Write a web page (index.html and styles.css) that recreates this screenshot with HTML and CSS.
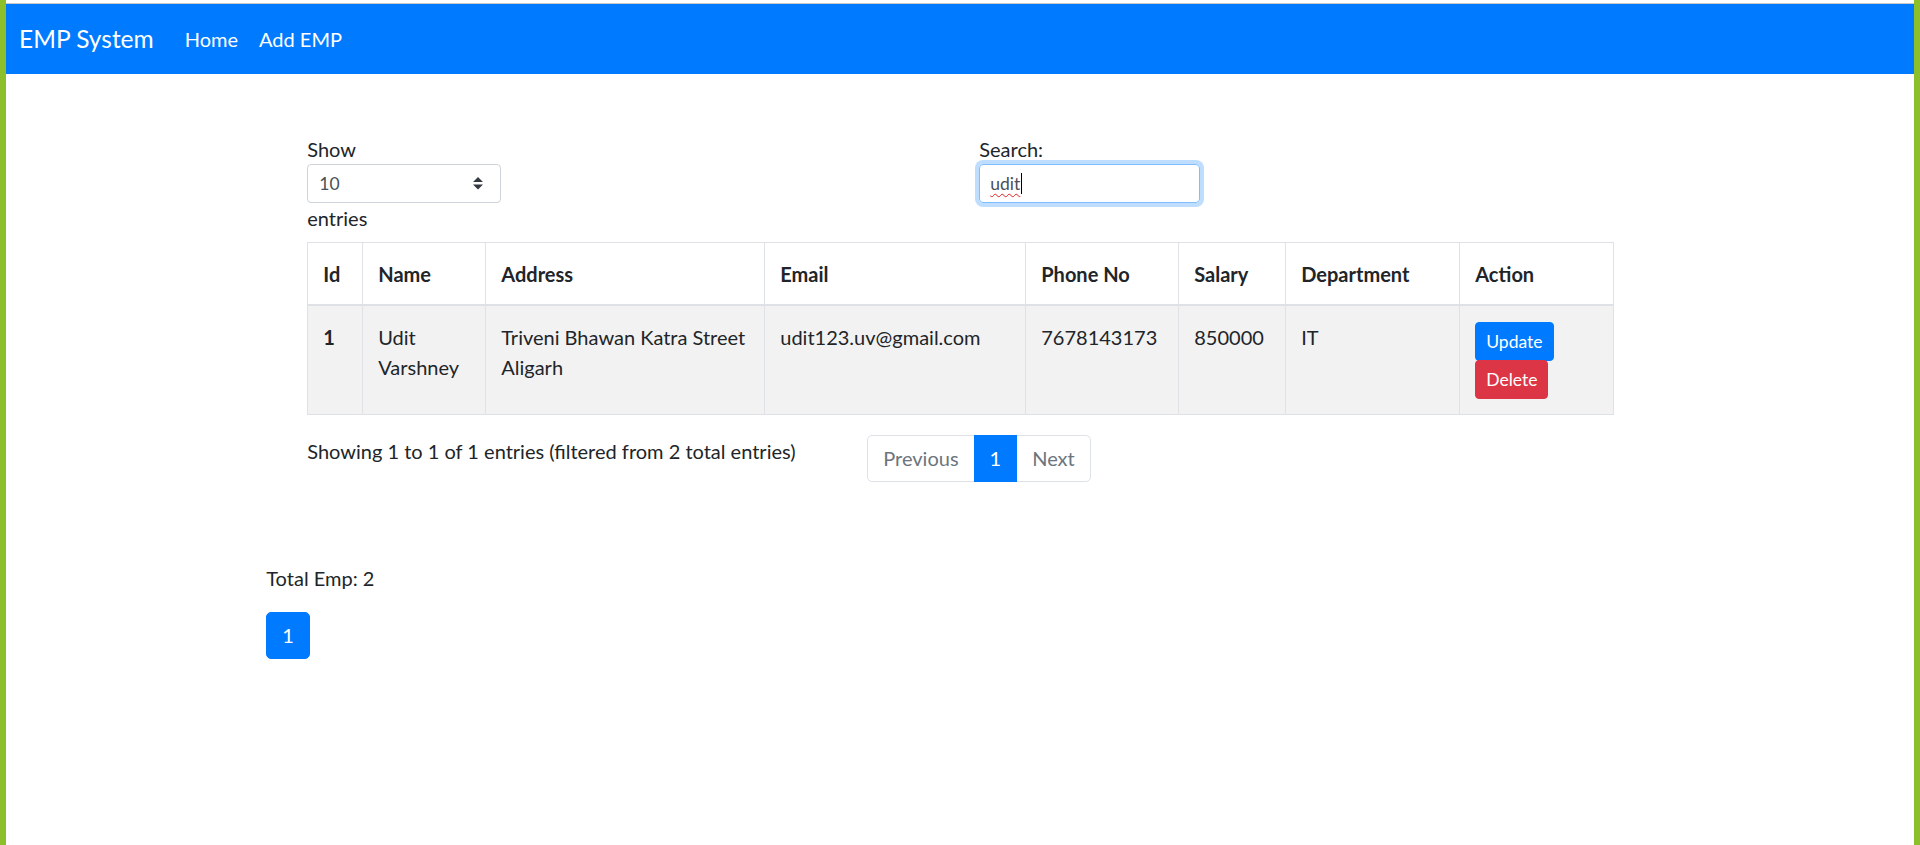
FILE: index.html
```html
<!DOCTYPE html>
<html lang="en">
<head>
<meta charset="utf-8">
<title>EMP System</title>
<link rel="stylesheet" href="styles.css">
</head>
<body>
<div class="frame">
  <div class="topline"></div>
  <nav class="navbar">
    <a class="brand" href="#">EMP System</a>
    <a class="nav-link" href="#">Home</a>
    <a class="nav-link" href="#">Add EMP</a>
  </nav>
  <main class="container">
    <section class="table-wrap">
      <div class="controls">
        <div class="length">
          <label class="ctl-label">Show
            <span class="select">10
              <svg class="caret" viewBox="0 0 4 5" width="10" height="12.5"><path d="M2 0L0 2h4zm0 5L0 3h4z" fill="#343a40"/></svg>
            </span>
            entries</label>
        </div>
        <div class="filter">
          <label class="ctl-label">Search:
            <span class="search"><span class="typed">udit</span><span class="cursor"></span></span>
          </label>
        </div>
      </div>
      <table class="emp-table">
        <thead>
          <tr>
            <th class="c-id">Id</th>
            <th class="c-name">Name</th>
            <th class="c-addr">Address</th>
            <th class="c-email">Email</th>
            <th class="c-phone">Phone No</th>
            <th class="c-sal">Salary</th>
            <th class="c-dept">Department</th>
            <th class="c-act">Action</th>
          </tr>
        </thead>
        <tbody>
          <tr>
            <th class="row-id">1</th>
            <td>Udit Varshney</td>
            <td>Triveni Bhawan Katra Street Aligarh</td>
            <td>udit123.uv@gmail.com</td>
            <td>7678143173</td>
            <td>850000</td>
            <td>IT</td>
            <td>
              <a class="btn btn-update" href="#">Update</a>
              <a class="btn btn-delete" href="#">Delete</a>
            </td>
          </tr>
        </tbody>
      </table>
      <div class="footer-row">
        <div class="info">Showing 1 to 1 of 1 entries (filtered from 2 total entries)</div>
        <ul class="pagination">
          <li class="page first">Previous</li>
          <li class="page active">1</li>
          <li class="page last">Next</li>
        </ul>
      </div>
    </section>
    <p class="total">Total Emp: 2</p>
    <a class="page-btn" href="#">1</a>
  </main>
</div>
</body>
</html>
```

FILE: styles.css
```css
* { box-sizing: border-box; }

html, body {
  margin: 0;
  padding: 0;
  background: #ffffff;
}

body {
  font-family: Lato, "Open Sans", "Noto Sans", sans-serif;
  font-size: 20px;
  line-height: 30px;
  color: #212529;
}

.frame {
  height: 845px;
  border-left: 6px solid #8cbf2a;
  border-right: 6px solid #8cbf2a;
  overflow: hidden;
}

.topline {
  height: 4px;
  border-bottom: 1px solid #c8c8c8;
  background: #ffffff;
}

.navbar {
  height: 70px;
  background: #007bff;
  display: flex;
  align-items: center;
  padding: 0 13px;
}

.brand {
  color: #ffffff;
  text-decoration: none;
  font-size: 24.5px;
  line-height: 30px;
  margin-right: 21px;
}

.nav-link {
  color: #ffffff;
  text-decoration: none;
  font-size: 20px;
  padding: 0 11px 0 10px;
}

.container {
  width: 1425px;
  margin: 0 auto;
  padding: 0 18.75px;
}

.table-wrap {
  padding: 0 41px;
}

.controls {
  display: flex;
  margin-top: 60px;
}

.length {
  width: 672px;
  flex: none;
}

.filter {
  flex: 1;
}

.ctl-label {
  display: block;
  font-weight: normal;
}

.select {
  display: flex;
  align-items: center;
  justify-content: space-between;
  width: 194px;
  height: 39px;
  border: 1px solid #ced4da;
  border-radius: 4px;
  padding: 0 17px 0 11px;
  font-size: 17.5px;
  color: #495057;
}

.search {
  display: flex;
  align-items: center;
  width: 221px;
  height: 39px;
  border: 1px solid #80bdff;
  border-radius: 4px;
  box-shadow: 0 0 0 4px rgba(0, 123, 255, 0.25);
  padding: 0 10px;
  font-size: 17.5px;
  color: #495057;
}

.typed {
  text-decoration: underline wavy #e02020;
  text-decoration-thickness: 1px;
  text-underline-offset: 3px;
}

.cursor {
  display: inline-block;
  width: 1px;
  height: 21px;
  background: #000000;
  margin-left: 1px;
}

.emp-table {
  width: 100%;
  margin-top: 9px;
  border-collapse: collapse;
  table-layout: fixed;
  border: 1px solid #dee2e6;
}

.emp-table th,
.emp-table td {
  padding: 15px;
  border: 1px solid #dee2e6;
  text-align: left;
  vertical-align: top;
  line-height: 30px;
}

.emp-table thead th {
  vertical-align: bottom;
  border-bottom: 2px solid #dee2e6;
  font-weight: 700;
  padding-top: 16px;
  padding-bottom: 15px;
}

.emp-table tbody th,
.emp-table tbody td {
  padding-top: 16px;
  padding-bottom: 15px;
}

.emp-table tbody tr {
  background: #f2f2f2;
}

.row-id { font-weight: 700; }

.c-id { width: 55px; }
.c-name { width: 123px; }
.c-addr { width: 279px; }
.c-email { width: 261px; }
.c-phone { width: 153px; }
.c-sal { width: 107px; }
.c-dept { width: 174px; }
.c-act { width: 154px; }

.btn {
  display: block;
  width: fit-content;
  color: #ffffff;
  text-decoration: none;
  font-size: 17.5px;
  line-height: 27px;
  padding: 5px 10px;
  border-radius: 4px;
}

.btn-update {
  background: #007bff;
  border: 1px solid #007bff;
}

.btn-delete {
  background: #dc3545;
  border: 1px solid #dc3545;
  margin-top: -1px;
}

.footer-row {
  display: flex;
  align-items: flex-start;
  margin-top: 20px;
}

.info {
  width: 560px;
  flex: none;
  padding-top: 1px;
}

.pagination {
  display: flex;
  list-style: none;
  margin: 0;
  padding: 0;
}

.page {
  padding: 10px 15px;
  line-height: 25px;
  border: 1px solid #dee2e6;
  color: #6c757d;
  background: #ffffff;
}

.page + .page { margin-left: -1px; }

.page.first { border-radius: 5px 0 0 5px; }
.page.last { border-radius: 0 5px 5px 0; }

.page.active {
  background: #007bff;
  border-color: #007bff;
  color: #ffffff;
  position: relative;
  z-index: 1;
}

.total {
  margin: 81px 0 0;
}

.page-btn {
  display: inline-block;
  margin-top: 19px;
  padding: 10px 15px;
  line-height: 25px;
  background: #007bff;
  border: 1px solid #007bff;
  border-radius: 5px;
  color: #ffffff;
  text-decoration: none;
}
```
